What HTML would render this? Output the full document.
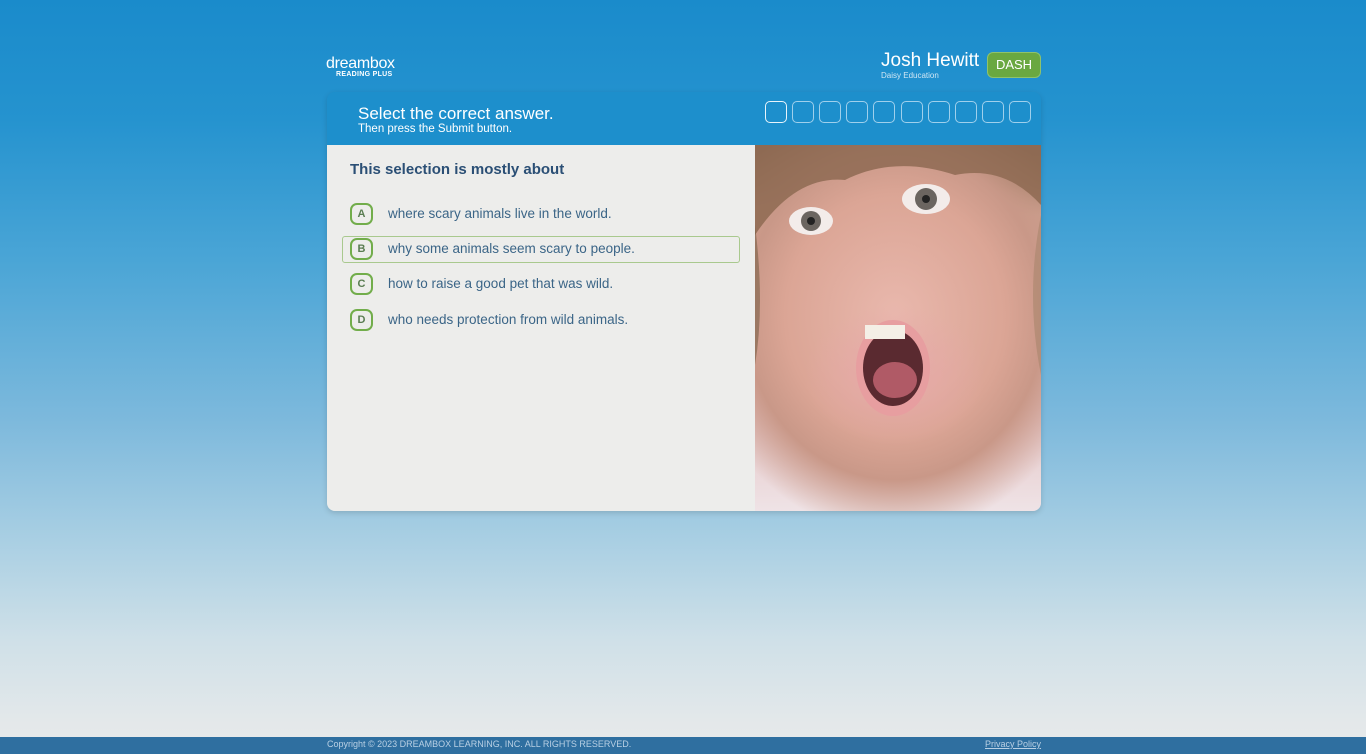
<!DOCTYPE html>
<html><head><meta charset="utf-8"><style>
*{margin:0;padding:0;box-sizing:border-box}
body{width:1366px;height:754px;overflow:hidden;font-family:"Liberation Sans",sans-serif;position:relative;
background:linear-gradient(180deg,#1a8bcb 0px,#2593cf 120px,#4aa5d6 260px,#7db9dc 420px,#a9cfe3 540px,#cfe0e8 640px,#e3e8ea 720px,#e6e9ea 737px)}
.logo{position:absolute;left:326px;top:55px;color:#fff}
.logo .d{font-size:16px;letter-spacing:-0.3px}
.logo .r{font-size:7px;font-weight:bold;margin-left:10px;margin-top:-2px;letter-spacing:.3px}
.user{position:absolute;left:881px;top:50px;color:#fff}
.user .n{font-size:19px}
.user .s{font-size:8px;color:#cfe6f4;margin-top:-1px}
.dash{position:absolute;left:987px;top:52px;width:54px;height:26px;border-radius:6px;background:#6aa841;border:1px solid #8fc36b;color:#fff;font-size:13px;text-align:center;line-height:24px}
.card{position:absolute;left:327px;top:92px;width:714px;height:419px;border-radius:8px;overflow:hidden;box-shadow:0 2px 6px rgba(0,0,0,.15)}
.hdr{height:53px;background:#1d8fcc;position:relative;color:#fff}
.hdr .t{position:absolute;left:31px;top:12px;font-size:17px}
.hdr .t2{position:absolute;left:31px;top:31px;font-size:11.5px}
.box{position:absolute;top:9px;width:22px;height:22px;border:1.5px solid #9fd0ec;border-radius:5px}
.left{position:absolute;left:0;top:53px;width:428px;height:366px;background:#ededeb}
.q{position:absolute;left:23px;top:16px;font-size:15px;font-weight:bold;color:#2b4f75}
.opt{position:absolute;left:23px;font-size:13.5px;color:#3b6587}
.opt .c{position:absolute;left:0;top:-4px;width:23px;height:22px;border:2px solid #72ad4b;border-radius:7px;font-size:11px;font-weight:bold;text-align:center;line-height:18px;color:#5a7d52}
.opt span.tx{position:absolute;left:38px;top:-1px;white-space:nowrap}
.sel{position:absolute;left:15px;top:91px;width:398px;height:27px;border:1.5px solid #a9c98e;border-radius:3px}
.photo{position:absolute;left:428px;top:53px;width:286px;height:366px;overflow:hidden;
background:radial-gradient(ellipse 90px 70px at 140px 230px,#e7a9a9 0,transparent 100%),
radial-gradient(ellipse 200px 220px at 140px 170px,#e9b8ad 0,#dba595 55%,#c99888 75%,transparent 100%),
linear-gradient(180deg,#8b6a55 0,#a07e66 40px,#caa08d 70px,#d9a999 120px,#e3c2c2 260px,#efe3e6 366px)}
.foot{position:absolute;left:0;top:737px;width:1366px;height:17px;background:#2f6fa0;color:#b9d0e4;font-size:9px}
</style></head><body>
<div class="logo"><div class="d">dreambox</div><div class="r">READING PLUS</div></div>
<div class="user"><div class="n">Josh Hewitt</div><div class="s">Daisy Education</div></div>
<div class="dash">DASH</div>
<div class="card">
 <div class="hdr"><div class="t">Select the correct answer.</div><div class="t2">Then press the Submit button.</div>
 <div class="box" style="left:438px;border-color:#e8f4fb"></div><div class="box" style="left:465px"></div><div class="box" style="left:492px"></div><div class="box" style="left:519px"></div><div class="box" style="left:546px"></div><div class="box" style="left:574px"></div><div class="box" style="left:601px"></div><div class="box" style="left:628px"></div><div class="box" style="left:655px"></div><div class="box" style="left:682px"></div>
 </div>
 <div class="left">
  <div class="q">This selection is mostly about</div>
  <div class="sel"></div>
  <div class="opt" style="top:62px"><div class="c">A</div><span class="tx">where scary animals live in the world.</span></div>
  <div class="opt" style="top:97px"><div class="c">B</div><span class="tx">why some animals seem scary to people.</span></div>
  <div class="opt" style="top:132px"><div class="c">C</div><span class="tx">how to raise a good pet that was wild.</span></div>
  <div class="opt" style="top:168px"><div class="c">D</div><span class="tx">who needs protection from wild animals.</span></div>
 </div>
 <div class="photo">
  <svg width="286" height="366">
   <path d="M0 0 H286 V60 Q250 20 200 30 Q140 10 90 35 Q40 30 0 90 Z" fill="#8e6a52" opacity=".85"/>
   <path d="M0 80 Q10 160 0 220 Z" fill="#7a6048" opacity=".6"/>
   <path d="M286 70 Q270 150 286 230 Z" fill="#a9856d" opacity=".6"/>
   <ellipse cx="56" cy="76" rx="22" ry="14" fill="#f3ecea"/><circle cx="56" cy="76" r="10" fill="#6b6560"/><circle cx="56" cy="76" r="4" fill="#222"/>
   <ellipse cx="171" cy="54" rx="24" ry="15" fill="#f3ecea"/><circle cx="171" cy="54" r="11" fill="#6b6560"/><circle cx="171" cy="54" r="4" fill="#222"/>
   <ellipse cx="138" cy="223" rx="37" ry="48" fill="#e79ea0"/><ellipse cx="138" cy="223" rx="30" ry="38" fill="#5a2a30"/><ellipse cx="140" cy="235" rx="22" ry="18" fill="#b05a66"/>
   <rect x="110" y="180" width="40" height="14" fill="#f4efe6"/>
  </svg>
 </div>
</div>
<div class="foot"><span style="position:absolute;left:327px;top:2px">Copyright © 2023 DREAMBOX LEARNING, INC. ALL RIGHTS RESERVED.</span><span style="position:absolute;left:985px;top:2px;text-decoration:underline">Privacy Policy</span></div>
</body></html>
